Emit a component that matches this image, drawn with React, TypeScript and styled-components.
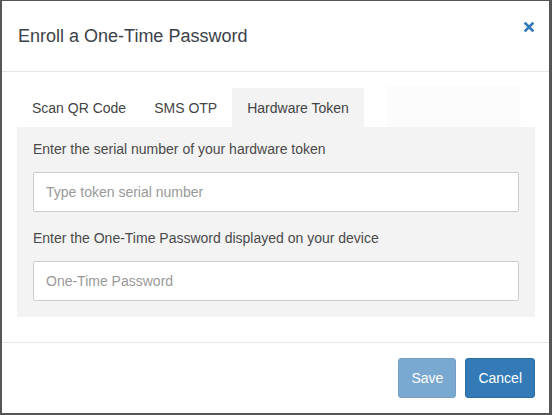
import styled, { createGlobalStyle } from "styled-components";

const GlobalStyle = createGlobalStyle`
  html, body {
    margin: 0;
    padding: 0;
    background: #4a4a4a;
  }
  * {
    box-sizing: border-box;
  }
`;

type TabItem = {
  label: string;
  active?: boolean;
};

const tabs: TabItem[] = [
  { label: "Scan QR Code" },
  { label: "SMS OTP" },
  { label: "Hardware Token", active: true },
];

const CloseIcon = () => (
  <svg width="10" height="10" viewBox="0 0 10 10">
    <path
      d="M1.5 1.5 L8.5 8.5 M8.5 1.5 L1.5 8.5"
      stroke="#337ab7"
      strokeWidth="2.6"
      strokeLinecap="square"
    />
  </svg>
);

const App = () => {
  return (
    <>
      <GlobalStyle />
      <Modal>
        <Header>
          <Title>Enroll a One-Time Password</Title>
          <CloseButton aria-label="Close">
            <CloseIcon />
          </CloseButton>
        </Header>
        <Body>
          <TabList>
            {tabs.map((tab) => (
              <Tab key={tab.label} $active={tab.active}>
                {tab.label}
              </Tab>
            ))}
            <GhostTab />
          </TabList>
          <Panel>
            <Label>Enter the serial number of your hardware token</Label>
            <Input placeholder="Type token serial number" />
            <Label $spaced>Enter the One-Time Password displayed on your device</Label>
            <Input placeholder="One-Time Password" />
          </Panel>
        </Body>
        <Footer>
          <Button disabled>Save</Button>
          <Button>Cancel</Button>
        </Footer>
      </Modal>
    </>
  );
};

const Modal = styled.div`
  width: 552px;
  height: 415px;
  background: #fff;
  border-style: solid;
  border-color: #555;
  border-width: 1px 3px 2px 2px;
  font-family: "Liberation Sans", Arial, sans-serif;
  color: #333;
  display: flex;
  flex-direction: column;
`;

const Header = styled.div`
  height: 71px;
  padding: 0 15px 1px 16px;
  display: flex;
  align-items: center;
  justify-content: space-between;
  border-bottom: 1px solid #e5e5e5;
`;

const Title = styled.h4`
  margin: 0;
  font-size: 18px;
  font-weight: 400;
  line-height: 24px;
  color: #3b4148;
`;

const CloseButton = styled.button`
  border: 0;
  background: none;
  padding: 0;
  margin-top: -18px;
  width: 10px;
  height: 10px;
  display: flex;
  cursor: pointer;
`;

const Body = styled.div`
  padding: 16px 14px 25px 15px;
  border-bottom: 1px solid #e5e5e5;
`;

const TabList = styled.div`
  display: flex;
  align-items: flex-end;
  height: 39px;
`;

type TabProps = {
  $active?: boolean;
};

const Tab = styled.div<TabProps>`
  height: 39px;
  padding: 0 15px;
  display: flex;
  align-items: center;
  font-size: 14px;
  color: #444;
  background: ${({ $active }) => ($active ? "#f3f3f3" : "transparent")};

  &:first-child {
    padding-right: 13px;
  }
`;

const GhostTab = styled.div`
  width: 133px;
  height: 41px;
  margin-left: 23px;
  background: #fcfcfc;
`;

const Panel = styled.div`
  background: #f3f3f3;
  padding: 12px 16px 16px 16px;
  display: flex;
  flex-direction: column;
`;

type LabelProps = {
  $spaced?: boolean;
};

const Label = styled.label<LabelProps>`
  font-size: 14px;
  line-height: 20px;
  color: #4a4a4a;
  margin-top: ${({ $spaced }) => ($spaced ? "16px" : "0")};
  margin-bottom: 13px;
`;

const Input = styled.input`
  height: 40px;
  width: 100%;
  border: 1px solid #ccc;
  border-radius: 2px;
  background: #fff;
  padding: 0 12px;
  font-family: inherit;
  font-size: 14px;
  color: #555;
  outline: none;

  &::placeholder {
    color: #999;
  }
`;

const Footer = styled.div`
  flex: 1;
  display: flex;
  justify-content: flex-end;
  align-items: flex-start;
  gap: 9px;
  padding: 15px 14px 0 0;
`;

const Button = styled.button`
  height: 40px;
  padding: 0 12px;
  border: 1px solid #2e6da4;
  border-radius: 3px;
  background: #337ab7;
  color: #fff;
  font-family: inherit;
  font-size: 14px;
  cursor: pointer;

  &:disabled {
    opacity: 0.65;
    cursor: not-allowed;
  }
`;

export default App;
